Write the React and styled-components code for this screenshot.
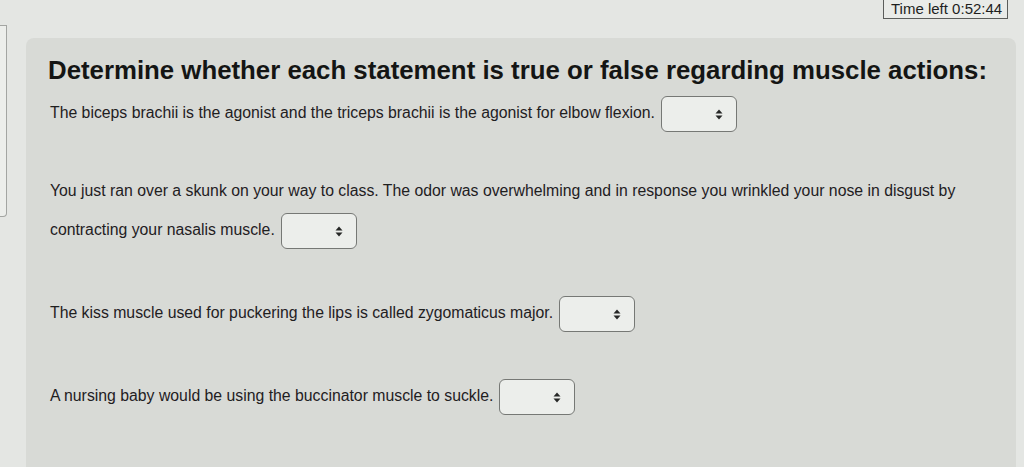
import React from "react";
import styled, { createGlobalStyle } from "styled-components";

const GlobalStyle = createGlobalStyle`
  html, body {
    margin: 0;
    padding: 0;
    background: #e4e6e3;
    overflow: hidden;
  }

  body {
    font-family: "Liberation Sans", Arial, sans-serif;
    color: #1b1c1b;
  }
`;

const Page = styled.div`
  width: 1024px;
  height: 467px;
  display: flex;
  flex-direction: column;
`;

const TopBar = styled.div`
  height: 38px;
  display: flex;
  justify-content: flex-end;
  padding-right: 16px;
`;

const Timer = styled.div`
  box-sizing: border-box;
  width: 125px;
  height: 19px;
  padding: 0 0 1px 7px;
  display: flex;
  align-items: flex-end;
  border: 1px solid #5b5d5b;
  border-top: none;
  font-size: 15px;
  line-height: 17px;
  white-space: nowrap;
  color: #1e1f1e;
  background: #e9ebe8;
`;

const Body = styled.div`
  flex: 1;
  display: flex;
  align-items: flex-start;
  min-height: 0;
`;

const Drawer = styled.div`
  width: 6px;
  height: 190px;
  margin-top: -13px;
  border: 1px solid #a3a5a2;
  border-left: none;
  border-radius: 0 0 4px 0;
  background: #eceeeb;
`;

const Card = styled.section`
  flex: 1;
  align-self: stretch;
  margin: 0 8px 0 19px;
  padding: 17px 20px 0 22px;
  background: #d8dad6;
  border-radius: 8px 8px 0 0;
`;

const Heading = styled.h2`
  margin: 0 0 1px;
  font-size: 25.8px;
  line-height: 30px;
  font-weight: 700;
  color: #141514;
`;

const Question = styled.p`
  margin: 0 0 27px 2px;
  font-size: 15.8px;
  line-height: 24px;
  color: #1f201f;

  &:first-of-type {
    margin-bottom: 37px;
  }
`;

const Select = styled.span`
  display: inline-flex;
  align-items: center;
  justify-content: flex-end;
  box-sizing: border-box;
  width: 76px;
  height: 36px;
  margin: 10px 0 10px 6px;
  padding-right: 13px;
  vertical-align: middle;
  background: #eceeeb;
  border: 1px solid #767875;
  border-radius: 6px;
`;

const Arrows = () => (
  <svg width="8" height="11" viewBox="0 0 8 11">
    <path d="M4 0.5 L7.5 4.5 L0.5 4.5 Z M4 10.5 L7.5 6.5 L0.5 6.5 Z" fill="#262726" />
  </svg>
);

const questions = [
  "The biceps brachii is the agonist and the triceps brachii is the agonist for elbow flexion.",
  "You just ran over a skunk on your way to class. The odor was overwhelming and in response you wrinkled your nose in disgust by contracting your nasalis muscle.",
  "The kiss muscle used for puckering the lips is called zygomaticus major.",
  "A nursing baby would be using the buccinator muscle to suckle.",
];

const App = () => {
  return (
    <Page>
      <GlobalStyle />
      <TopBar>
        <Timer>Time left 0:52:44</Timer>
      </TopBar>
      <Body>
        <Drawer />
        <Card>
          <Heading>
            Determine whether each statement is true or false regarding muscle
            actions:
          </Heading>
          {questions.map((text, i) => (
            <Question key={i}>
              {text}
              <Select>
                <Arrows />
              </Select>
            </Question>
          ))}
        </Card>
      </Body>
    </Page>
  );
};

export default App;
